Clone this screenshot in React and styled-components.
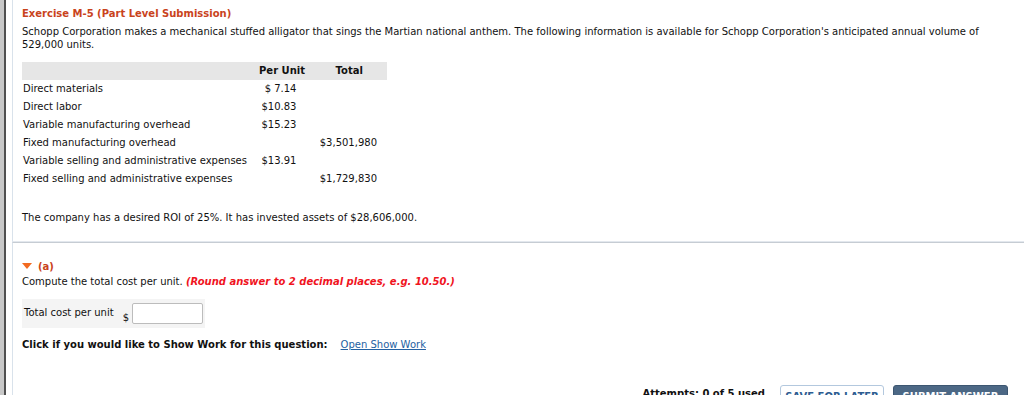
import React from 'react'
import styled, { createGlobalStyle } from 'styled-components'

const Global = createGlobalStyle`
  html, body {
    margin: 0;
    padding: 0;
    background: #fff;
    overflow: hidden;
  }
  body {
    font-family: "DejaVu Sans", Verdana, sans-serif;
    font-size: 10px;
    color: #111;
  }
`

const Page = styled.div`
  display: flex;
  height: 395px;
  overflow: hidden;
`

const Rail = styled.div`
  width: 4px;
  flex: none;
  background: #c8c8c8;
  border-right: 2px solid #505050;
`

const Main = styled.div`
  flex: 1;
  margin-left: 6px;
  display: flex;
  flex-direction: column;
`

const Panel = styled.section`
  border-left: 1px solid #d9e2eb;
  padding: ${p => p.$pad};
  ${p => p.$top && 'border-top: 1px solid #c6ccd3;'}
  ${p => p.$bottom && 'border-bottom: 1px solid #e3e8ee;'}
  flex: ${p => (p.$grow ? 1 : 'none')};
`

const Gap = styled.div`
  height: 7px;
  background: #f3f6f9;
  border-left: 1px solid #d9e2eb;
`

const Title = styled.h2`
  margin: 0 0 4px;
  font-size: 10px;
  line-height: 14px;
  font-weight: bold;
  color: #c9431c;
`

const Text = styled.p`
  margin: ${p => p.$m || '0'};
  font-size: 10px;
  line-height: 13px;
  font-weight: ${p => (p.$bold ? 'bold' : 'normal')};
`

const Table = styled.table`
  margin-top: 11px;
  border-collapse: collapse;
  width: 365px;
  td, th {
    padding: 0;
    height: 18px;
    font-size: 10px;
    line-height: 18px;
    white-space: nowrap;
  }
`

const HeadRow = styled.tr`
  background: #e6e6e6;
  th {
    text-align: center;
    font-weight: bold;
  }
`

const Cell = styled.td`
  width: ${p => p.$w}px;
  text-align: ${p => p.$align || 'left'};
  padding-right: ${p => p.$pr || 0}px !important;
  padding-left: ${p => p.$pl || 0}px !important;
`

const PartHead = styled.div`
  display: flex;
  align-items: center;
  gap: 6px;
  height: 14px;
  margin-bottom: 2px;
  color: #c9431c;
  font-weight: bold;
  font-size: 10px;
`

const Arrow = styled.span`
  width: 0;
  height: 0;
  border-left: 5px solid transparent;
  border-right: 5px solid transparent;
  border-top: 6px solid #f26a21;
`

const Hint = styled.span`
  color: #f0141e;
  font-weight: bold;
  font-style: italic;
`

const AnswerBox = styled.div`
  margin-top: 11px;
  width: 183px;
  height: 29px;
  box-sizing: border-box;
  background: #f4f4f4;
  display: flex;
  align-items: center;
  padding: 0 1px 0 2px;
`

const Label = styled.span`
  font-size: 10px;
  margin-top: -2px;
`

const Dollar = styled.span`
  margin: 8px 3px 0 9px;
  font-size: 10px;
`

const Input = styled.input`
  width: 71px;
  height: 21px;
  box-sizing: border-box;
  border: 1px solid #bcbcbc;
  border-radius: 2px;
  background: #fff;
  padding: 0 3px;
`

const ShowWork = styled.div`
  margin-top: 10px;
  display: flex;
  gap: 13px;
  font-size: 10px;
  line-height: 13px;
  b { font-weight: bold; }
`

const Link = styled.a`
  color: #2461a2;
  text-decoration: underline;
  cursor: pointer;
`

const Footer = styled.div`
  margin-top: 34px;
  display: flex;
  justify-content: flex-end;
  align-items: flex-start;
  gap: 9px;
  padding-right: 7px;
`

const Attempts = styled.span`
  margin-top: 3px;
  margin-right: 6px;
  font-weight: bold;
  font-size: 10px;
`

const Button = styled.button`
  height: 22px;
  padding: 0;
  width: ${p => p.$w}px;
  border-radius: 3px;
  font-family: "DejaVu Sans", Verdana, sans-serif;
  font-size: 10px;
  font-weight: bold;
  text-transform: uppercase;
  border: 1px solid ${p => (p.$primary ? '#3c5671' : '#b3c8de')};
  background: ${p => (p.$primary ? '#4c6885' : '#fff')};
  color: ${p => (p.$primary ? '#fff' : '#2d5c91')};
`

const rows = [
  ['Direct materials', '$ 7.14', ''],
  ['Direct labor', '$10.83', ''],
  ['Variable manufacturing overhead', '$15.23', ''],
  ['Fixed manufacturing overhead', '', '$3,501,980'],
  ['Variable selling and administrative expenses', '$13.91', ''],
  ['Fixed selling and administrative expenses', '', '$1,729,830'],
]

export default function App() {
  return (
    <Page>
      <Global />
      <Rail />
      <Main>
        <Panel $pad="7px 9px 17px" $bottom>
          <Title>Exercise M-5 (Part Level Submission)</Title>
          <Text>
            Schopp Corporation makes a mechanical stuffed alligator that sings the Martian national anthem. The following information is available for Schopp Corporation's anticipated annual volume of 529,000 units.
          </Text>
          <Table>
            <tbody>
              <HeadRow>
                <th style={{ width: 236 }}></th>
                <th style={{ width: 54 }}>Per Unit</th>
                <th style={{ width: 75 }}>Total</th>
              </HeadRow>
              {rows.map(r => (
                <tr key={r[0]}>
                  <Cell $w={236} $pl={1}>{r[0]}</Cell>
                  <Cell $w={54} $align="right" $pr={15}>{r[1]}</Cell>
                  <Cell $w={75} $align="right" $pr={10}>{r[2]}</Cell>
                </tr>
              ))}
            </tbody>
          </Table>
          <Text $m="23px 0 0">
            The company has a desired ROI of 25%. It has invested assets of $28,606,000.
          </Text>
        </Panel>
        <Gap />
        <Panel $pad="16px 9px 0" $top $grow>
          <PartHead>
            <Arrow />
            <span>(a)</span>
          </PartHead>
          <Text>
            Compute the total cost per unit. <Hint>(Round answer to 2 decimal places, e.g. 10.50.)</Hint>
          </Text>
          <AnswerBox>
            <Label>Total cost per unit</Label>
            <Dollar>$</Dollar>
            <Input type="text" />
          </AnswerBox>
          <ShowWork>
            <b>Click if you would like to Show Work for this question:</b>
            <Link>Open Show Work</Link>
          </ShowWork>
          <Footer>
            <Attempts>Attempts: 0 of 5 used</Attempts>
            <Button $w={104}>Save for Later</Button>
            <Button $w={115} $primary>Submit Answer</Button>
          </Footer>
        </Panel>
      </Main>
    </Page>
  )
}
